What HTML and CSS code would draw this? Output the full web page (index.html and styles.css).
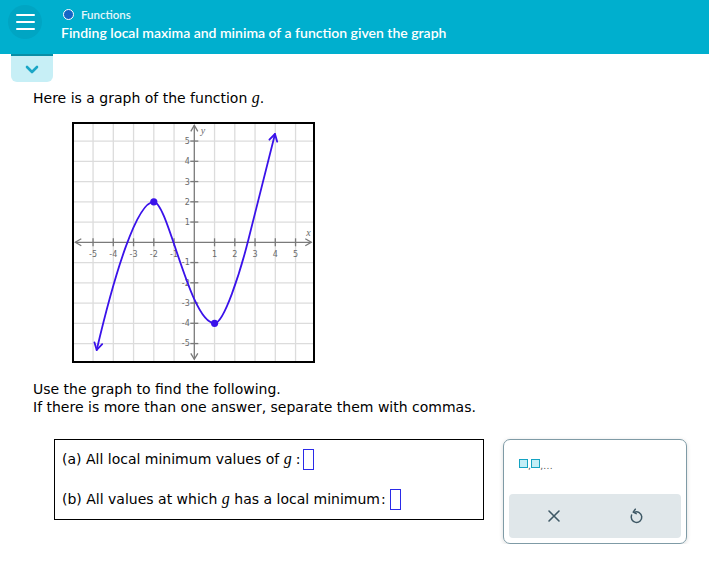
FILE: index.html
```html
<!DOCTYPE html>
<html>
<head>
<meta charset="utf-8">
<link rel="stylesheet" href="styles.css">
</head>
<body>
<header class="topbar">
  <div class="menu-btn">
    <span></span><span></span><span></span>
  </div>
  <div class="titles">
    <div class="topic"><span class="topic-dot"></span>Functions</div>
    <div class="title">Finding local maxima and minima of a function given the graph</div>
  </div>
</header>
<div class="tab-row">
  <div class="drop-tab">
    <svg width="14" height="9" viewBox="0 0 14 9"><polyline points="2,2 7,7 12,2" fill="none" stroke="#1aa6c6" stroke-width="2.6" stroke-linecap="round" stroke-linejoin="round"/></svg>
  </div>
</div>
<main class="content">
  <p class="intro">Here is a graph of the function <i class="var">g</i>.</p>
  <div class="graph">
    <svg width="243" height="241" viewBox="72 122 243 241">
      <g transform="translate(194.3 242.3)">
        <g stroke="#dcdcdc" stroke-width="1.3">
          <line x1="-101.25" y1="-119" x2="-101.25" y2="120"/>
          <line x1="-81" y1="-119" x2="-81" y2="120"/>
          <line x1="-60.75" y1="-119" x2="-60.75" y2="120"/>
          <line x1="-40.5" y1="-119" x2="-40.5" y2="120"/>
          <line x1="-20.25" y1="-119" x2="-20.25" y2="120"/>
          <line x1="20.25" y1="-119" x2="20.25" y2="120"/>
          <line x1="40.5" y1="-119" x2="40.5" y2="120"/>
          <line x1="60.75" y1="-119" x2="60.75" y2="120"/>
          <line x1="81" y1="-119" x2="81" y2="120"/>
          <line x1="101.25" y1="-119" x2="101.25" y2="120"/>
          <line y1="-101.25" x1="-121" y2="-101.25" x2="120"/>
          <line y1="-81" x1="-121" y2="-81" x2="120"/>
          <line y1="-60.75" x1="-121" y2="-60.75" x2="120"/>
          <line y1="-40.5" x1="-121" y2="-40.5" x2="120"/>
          <line y1="-20.25" x1="-121" y2="-20.25" x2="120"/>
          <line y1="20.25" x1="-121" y2="20.25" x2="120"/>
          <line y1="40.5" x1="-121" y2="40.5" x2="120"/>
          <line y1="60.75" x1="-121" y2="60.75" x2="120"/>
          <line y1="81" x1="-121" y2="81" x2="120"/>
          <line y1="101.25" x1="-121" y2="101.25" x2="120"/>
        </g>
        <g stroke="#7a7a7a" stroke-width="1.3" fill="none">
          <line x1="-119" y1="0" x2="117" y2="0"/>
          <line x1="0" y1="-117" x2="0" y2="117"/>
          <polyline points="-113,-3.5 -119,0 -113,3.5"/>
          <polyline points="111,-3.5 117,0 111,3.5"/>
          <polyline points="-3.5,-111 0,-117 3.5,-111"/>
          <polyline points="-3.5,111 0,117 3.5,111"/>
          <line x1="-101.25" y1="-4" x2="-101.25" y2="4"/>
          <line x1="-81" y1="-4" x2="-81" y2="4"/>
          <line x1="-60.75" y1="-4" x2="-60.75" y2="4"/>
          <line x1="-40.5" y1="-4" x2="-40.5" y2="4"/>
          <line x1="-20.25" y1="-4" x2="-20.25" y2="4"/>
          <line x1="20.25" y1="-4" x2="20.25" y2="4"/>
          <line x1="40.5" y1="-4" x2="40.5" y2="4"/>
          <line x1="60.75" y1="-4" x2="60.75" y2="4"/>
          <line x1="81" y1="-4" x2="81" y2="4"/>
          <line x1="101.25" y1="-4" x2="101.25" y2="4"/>
          <line y1="-101.25" x1="-4" y2="-101.25" x2="4"/>
          <line y1="-81" x1="-4" y2="-81" x2="4"/>
          <line y1="-60.75" x1="-4" y2="-60.75" x2="4"/>
          <line y1="-40.5" x1="-4" y2="-40.5" x2="4"/>
          <line y1="-20.25" x1="-4" y2="-20.25" x2="4"/>
          <line y1="20.25" x1="-4" y2="20.25" x2="4"/>
          <line y1="40.5" x1="-4" y2="40.5" x2="4"/>
          <line y1="60.75" x1="-4" y2="60.75" x2="4"/>
          <line y1="81" x1="-4" y2="81" x2="4"/>
          <line y1="101.25" x1="-4" y2="101.25" x2="4"/>
        </g>
        <g class="tick-label" text-anchor="middle">
          <text x="-101.25" y="15">-5</text>
          <text x="-81" y="15">-4</text>
          <text x="-60.75" y="15">-3</text>
          <text x="-40.5" y="15">-2</text>
          <text x="-20.25" y="15">-1</text>
          <text x="20.25" y="15">1</text>
          <text x="40.5" y="15">2</text>
          <text x="60.75" y="15">3</text>
          <text x="81" y="15">4</text>
          <text x="101.25" y="15">5</text>
        </g>
        <g class="tick-label" text-anchor="end">
          <text x="-4.5" y="-98.3">5</text>
          <text x="-4.5" y="-78">4</text>
          <text x="-4.5" y="-57.8">3</text>
          <text x="-4.5" y="-37.5">2</text>
          <text x="-4.5" y="-17.3">1</text>
          <text x="-4.5" y="23.2">-1</text>
          <text x="-4.5" y="43.5">-2</text>
          <text x="-4.5" y="63.7">-3</text>
          <text x="-4.5" y="84">-4</text>
          <text x="-4.5" y="104.2">-5</text>
        </g>
        <text class="axis-name" x="6.5" y="-108">y</text>
        <text class="axis-name" x="112" y="-6">x</text>
        <g stroke="#3a12ea" stroke-width="1.8" fill="none" stroke-linecap="round" stroke-linejoin="round">
          <path d="M-97.6 107.7 C-79.3 29.7 -57.3 -40.5 -40.5 -40.5 C-26.3 -40.5 -4.3 81 20.25 81 C29.7 81 46 29.5 54 -2.3 L80.7 -108.3"/>
          <polyline points="-99.9,100 -97.6,107.7 -92.1,101.9"/>
          <polyline points="75.1,-102.6 80.7,-108.3 82.9,-100.6"/>
        </g>
        <circle cx="-40.5" cy="-40.5" r="3.6" fill="#3a12ea"/>
        <circle cx="20.25" cy="81" r="3.6" fill="#3a12ea"/>
      </g>
      <rect x="73" y="123" width="241" height="239" fill="none" stroke="#000" stroke-width="2"/>
    </svg>
  </div>
  <p class="instructions">Use the graph to find the following.<br>If there is more than one answer, separate them with commas.</p>
  <div class="answer-row">
    <div class="answer-box">
      <div class="answer-line">(a) All local minimum values of <i class="var">g</i><span class="colon">:</span><span class="blank"></span></div>
      <div class="answer-line">(b) All values at which <i class="var">g</i> has a local minimum<span class="colon tight">:</span><span class="blank"></span></div>
    </div>
    <div class="tool-panel">
      <div class="tool-top">
        <span class="sq"></span><span class="comma">,</span><span class="sq"></span><span class="comma">,...</span>
      </div>
      <div class="tool-actions">
        <button class="tool-btn" aria-label="clear">
          <svg width="14" height="14" viewBox="0 0 14 14"><path d="M2 2 L12 12 M12 2 L2 12" stroke="#3e5865" stroke-width="1.6" stroke-linecap="round"/></svg>
        </button>
        <button class="tool-btn" aria-label="undo">
          <svg width="16" height="17" viewBox="0 0 16 17"><path d="M6.5 4.2 A5.3 5.3 0 1 1 3.6 7" fill="none" stroke="#3e5865" stroke-width="1.5" stroke-linecap="round"/><polyline points="7.3,1.2 5.2,4.1 8.2,5.6" fill="none" stroke="#3e5865" stroke-width="1.5" stroke-linecap="round" stroke-linejoin="round"/></svg>
        </button>
      </div>
    </div>
  </div>
</main>
</body>
</html>
```
FILE: styles.css
```css
* { box-sizing: border-box; }
html, body { margin: 0; padding: 0; background: #fff; }
body { font-family: "DejaVu Sans", Verdana, sans-serif; color: #000; }

.topbar {
  height: 54px;
  background: #00afce;
  display: flex;
  align-items: flex-start;
}
.menu-btn {
  width: 34px;
  height: 34px;
  margin: 5px 0 0 8px;
  border-radius: 50%;
  background: #00a5c3;
  display: flex;
  flex-direction: column;
  justify-content: center;
  align-items: center;
  gap: 4.6px;
}
.menu-btn span {
  display: block;
  width: 19px;
  height: 2px;
  background: #fff;
  border-radius: 1px;
}
.titles {
  margin-left: 19px;
  font-family: Lato, "Open Sans", sans-serif;
  color: #fff;
}
.topic {
  display: flex;
  align-items: center;
  font-size: 11.5px;
  margin-top: 8px;
  margin-left: 2px;
  height: 13px;
  color: #e4f6fa;
  font-weight: 600;
}
.topic-dot {
  width: 11px;
  height: 11px;
  border-radius: 50%;
  background: #1565c5;
  border: 1.5px solid #fff;
  margin-right: 7px;
}
.title {
  font-size: 14px;
  font-weight: 600;
  margin-top: 3px;
}

.tab-row { padding-left: 11px; height: 28px; }
.drop-tab {
  width: 42px;
  height: 28px;
  background: #c7eff6;
  border-top: 2px solid #0a8ea6;
  border-radius: 0 0 6px 6px;
  display: flex;
  align-items: center;
  justify-content: center;
}

.content { padding-left: 33px; }
.intro {
  margin: 7px 0 0;
  font-size: 14px;
  line-height: 18px;
}
.var {
  font-family: "Liberation Serif", "DejaVu Serif", serif;
  font-style: italic;
  font-size: 16px;
}
.graph {
  margin: 15px 0 0 39px;
  height: 241px;
}
.graph svg { display: block; }
.tick-label {
  font-family: "DejaVu Sans", sans-serif;
  font-size: 8px;
  fill: #6a6a6a;
}
.axis-name {
  font-family: "Liberation Serif", serif;
  font-style: italic;
  font-size: 10px;
  fill: #6a6a6a;
}
.instructions {
  margin: 17px 0 0;
  font-size: 14px;
  line-height: 18px;
}
.answer-row {
  display: flex;
  align-items: flex-start;
  margin-top: 23px;
  margin-left: 21px;
}
.answer-box {
  width: 430px;
  height: 81px;
  border: 1px solid #000;
  padding: 6px 0 0 7px;
}
.answer-line {
  display: flex;
  align-items: center;
  height: 26px;
  font-size: 14px;
  margin-bottom: 14px;
  white-space: pre;
}
.colon { margin: 0 3px 0 4px; }
.colon.tight { margin: 0 4px 0 1px; }
.blank {
  display: inline-block;
  width: 11px;
  height: 21px;
  border: 1px solid #2b2be8;
}
.tool-panel {
  margin-left: 19px;
  width: 184px;
  height: 105px;
  border: 1px solid #7f9ba6;
  border-radius: 7px;
  box-shadow: 0 1px 4px rgba(0, 0, 0, 0.15);
  padding: 0 5px 5px;
  display: flex;
  flex-direction: column;
}
.tool-top {
  height: 54px;
  display: flex;
  align-items: center;
  padding-left: 10px;
  padding-bottom: 8px;
}
.sq {
  display: inline-block;
  width: 9px;
  height: 9px;
  border: 1.5px solid #14a3c2;
  background: #c3eef6;
}
.comma {
  font-size: 9px;
  color: #555;
  align-self: center;
  margin-top: 6px;
  letter-spacing: 0.3px;
}
.tool-actions {
  flex: 1;
  background: #e0e7ea;
  border-radius: 4px;
  display: flex;
  align-items: center;
  justify-content: space-around;
  padding: 0 4px;
}
.tool-btn {
  background: none;
  border: 0;
  padding: 0;
  width: 40px;
  height: 30px;
  display: flex;
  align-items: center;
  justify-content: center;
}
```
